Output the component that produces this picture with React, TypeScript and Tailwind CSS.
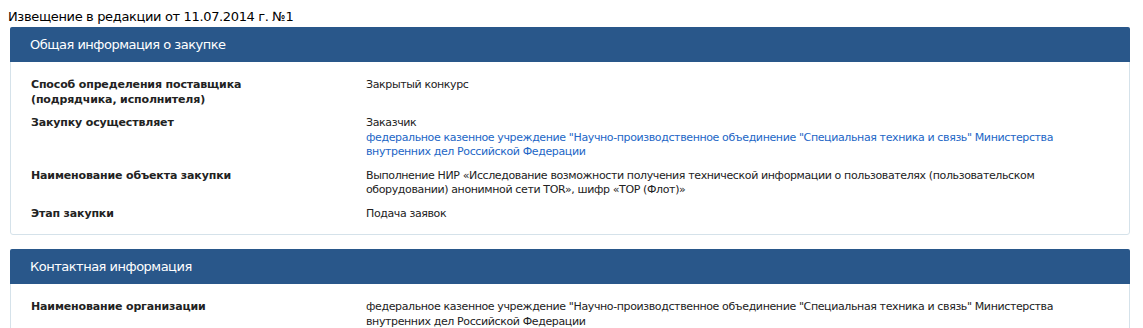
const font = { fontFamily: '"DejaVu Sans", Verdana, sans-serif' }

type Row = { label: string; value: React.ReactNode }

function Card({ title, rows }: { title: string; rows: Row[] }) {
  return (
    <div className="mx-[10px] w-[1120px] rounded-[3px] border border-[#d5e2ea] bg-white">
      <div className="-mx-px -mt-px h-[35px] rounded-t-[2px] bg-[#29578a] pl-[20px] text-[13px] leading-[35px] tracking-[-0.5px] text-white">
        {title}
      </div>
      <div className="pt-[16px] pb-[13px] pl-[20px]">
        {rows.map((r, i) => (
          <div key={i} className="mb-[9px] flex text-[11px] leading-[14.5px] text-[#222] last:mb-0">
            <div className="w-[335px] shrink-0 pr-[80px] font-bold tracking-[-0.15px]">{r.label}</div>
            <div className="w-[745px] tracking-[-0.38px]">{r.value}</div>
          </div>
        ))}
      </div>
    </div>
  )
}

const org =
  'федеральное казенное учреждение "Научно-производственное объединение "Специальная техника и связь" Министерства внутренних дел Российской Федерации'

export default function App() {
  return (
    <div className="h-[328px] w-[1143px] overflow-hidden bg-white" style={font}>
      <div className="pl-[8px] pt-[7px] text-[13px] leading-[20px] tracking-[-0.35px] text-black">
        Извещение в редакции от 11.07.2014 г. №1
      </div>
      <Card
        title="Общая информация о закупке"
        rows={[
          {
            label: 'Способ определения поставщика (подрядчика, исполнителя)',
            value: 'Закрытый конкурс',
          },
          {
            label: 'Закупку осуществляет',
            value: (
              <>
                <div>Заказчик</div>
                <div className="text-[#2266c6]">{org}</div>
              </>
            ),
          },
          {
            label: 'Наименование объекта закупки',
            value:
              'Выполнение НИР «Исследование возможности получения технической информации о пользователях (пользовательском оборудовании) анонимной сети TOR», шифр «ТОР (Флот)»',
          },
          { label: 'Этап закупки', value: 'Подача заявок' },
        ]}
      />
      <div className="h-[14px]" />
      <Card
        title="Контактная информация"
        rows={[{ label: 'Наименование организации', value: org }]}
      />
    </div>
  )
}
